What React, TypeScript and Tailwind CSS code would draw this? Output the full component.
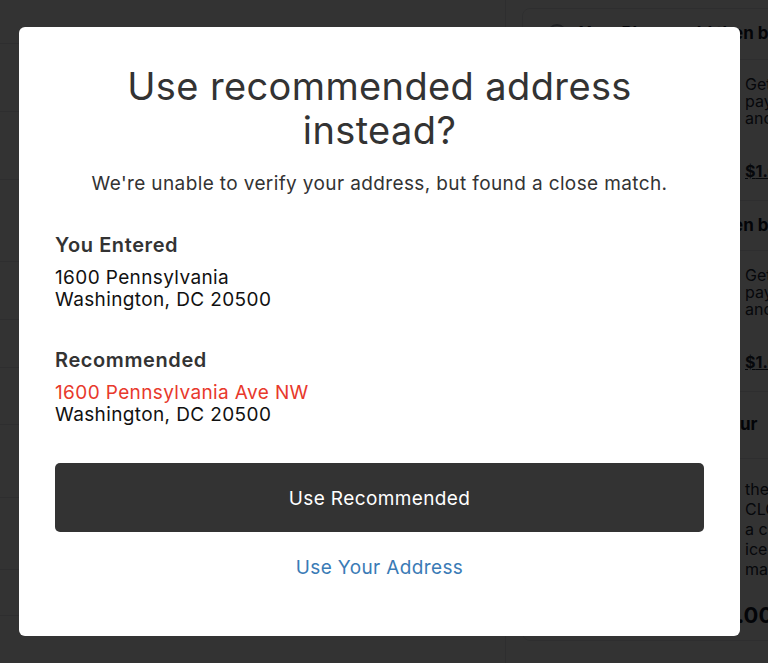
import React from "react";

const font = { fontFamily: "Inter, 'Noto Sans', sans-serif" };

function LeftRows() {
  const rows = [
    { h: 44, label: "" },
    { h: 68, label: "" },
    { h: 68, label: "" },
    { h: 82, label: "" },
    { h: 58, label: "" },
    { h: 48, label: "" },
    { h: 57, label: "" },
    { h: 73, label: "Shipping Option" },
    { h: 72, label: "Cost", value: "$50.00" },
    { h: 46, label: "" },
    { h: 60, label: "" },
  ];
  return (
    <div className="w-[506px] shrink-0 border-r border-gray-200">
      {rows.map((r, i) => (
        <div
          key={i}
          className="flex flex-col justify-center border-b border-gray-200 pl-[480px] pr-2 text-[22px] text-gray-900"
          style={{ height: r.h }}
        >
          {r.value ? (
            <>
              <span className="text-[15px] text-gray-500">{r.label}</span>
              <span>{r.value}</span>
            </>
          ) : (
            <span>{r.label}</span>
          )}
        </div>
      ))}
    </div>
  );
}

function PlanItem({ title, price }: { title: string; price: string }) {
  return (
    <div className="border-b border-gray-200">
      <div className="flex items-center gap-3 border-b border-gray-200 px-6 py-3">
        <span className="h-5 w-5 shrink-0 rounded-full border-2 border-gray-400" />
        <span className="whitespace-nowrap text-[17px] font-bold text-gray-900">{title}</span>
      </div>
      <div className="pb-5 pt-4 pl-[222px] text-[16px] leading-[17px] text-gray-800">
        <p className="whitespace-nowrap">Get a special offer</p>
        <p className="whitespace-nowrap">payment not needed</p>
        <p className="whitespace-nowrap">and then more</p>
        <p className="mt-9 whitespace-nowrap font-bold underline">${price}</p>
      </div>
    </div>
  );
}

function Page() {
  return (
    <div className="flex min-h-[663px] bg-white">
      <LeftRows />
      <div className="ml-4 mt-2 w-[400px] shrink-0">
        <div className="rounded-lg border border-gray-200">
          <PlanItem title="Your Plan would then be" price="1.00" />
          <PlanItem title="Your Plan would then be" price="1.00" />
          <div className="flex items-center gap-3 border-b border-gray-200 px-6 py-5">
            <span className="h-5 w-5 shrink-0 rounded-full border-2 border-gray-400" />
            <span className="whitespace-nowrap pl-[140px] text-[17px] font-bold text-gray-900">Your</span>
          </div>
          <div className="py-5 pl-[222px] text-[16px] leading-[20px] text-gray-800">
            <p className="whitespace-nowrap">the limited</p>
            <p className="whitespace-nowrap">CLOSE</p>
            <p className="whitespace-nowrap">a card</p>
            <p className="whitespace-nowrap">ice</p>
            <p className="whitespace-nowrap">mains</p>
          </div>
          <div className="pb-2 pl-[100px] text-[22px] text-gray-900">
            <span className="line-through">$100.00</span> <span className="font-bold">$1.00</span>
          </div>
        </div>
      </div>
    </div>
  );
}

export default function App() {
  return (
    <div className="relative h-[663px] w-[768px] overflow-hidden" style={font}>
      <Page />
      <div className="fixed inset-0 bg-black/80" />
      <div className="fixed left-[19px] top-[27px] w-[721px] rounded-md bg-white px-9 pb-[56px] pt-[37px]">
        <h2 className="text-center text-[38px] font-normal leading-[44px] tracking-[0.01em] text-[#333]">
          Use recommended address
          <br />
          instead?
        </h2>
        <p className="mt-5 text-center text-[19px] leading-6 tracking-[0.02em] text-[#333]">
          We're unable to verify your address, but found a close match.
        </p>

        <h3 className="mt-[37px] text-[20px] font-semibold leading-6 tracking-[0.03em] text-[#333]">You Entered</h3>
        <div className="mt-[10px] text-[19px] leading-[22px] tracking-[0.02em] text-[#111]">
          <p>1600 Pennsylvania</p>
          <p>Washington, DC 20500</p>
        </div>

        <h3 className="mt-[37px] text-[20px] font-semibold leading-6 tracking-[0.03em] text-[#333]">Recommended</h3>
        <div className="mt-[10px] text-[19px] leading-[22px] tracking-[0.02em] text-[#111]">
          <p className="text-[#e8392c]">1600 Pennsylvania Ave NW</p>
          <p>Washington, DC 20500</p>
        </div>

        <button
          type="button"
          className="mt-[37px] flex h-[69px] w-full items-center justify-center rounded-[5px] bg-[#333] pt-[3px] text-[19px] tracking-[0.02em] text-white"
        >
          Use Recommended
        </button>
        <div className="mt-[24px] text-center text-[19px] leading-6 tracking-[0.02em] text-[#3a7bb6]">
          Use Your Address
        </div>
      </div>
    </div>
  );
}
